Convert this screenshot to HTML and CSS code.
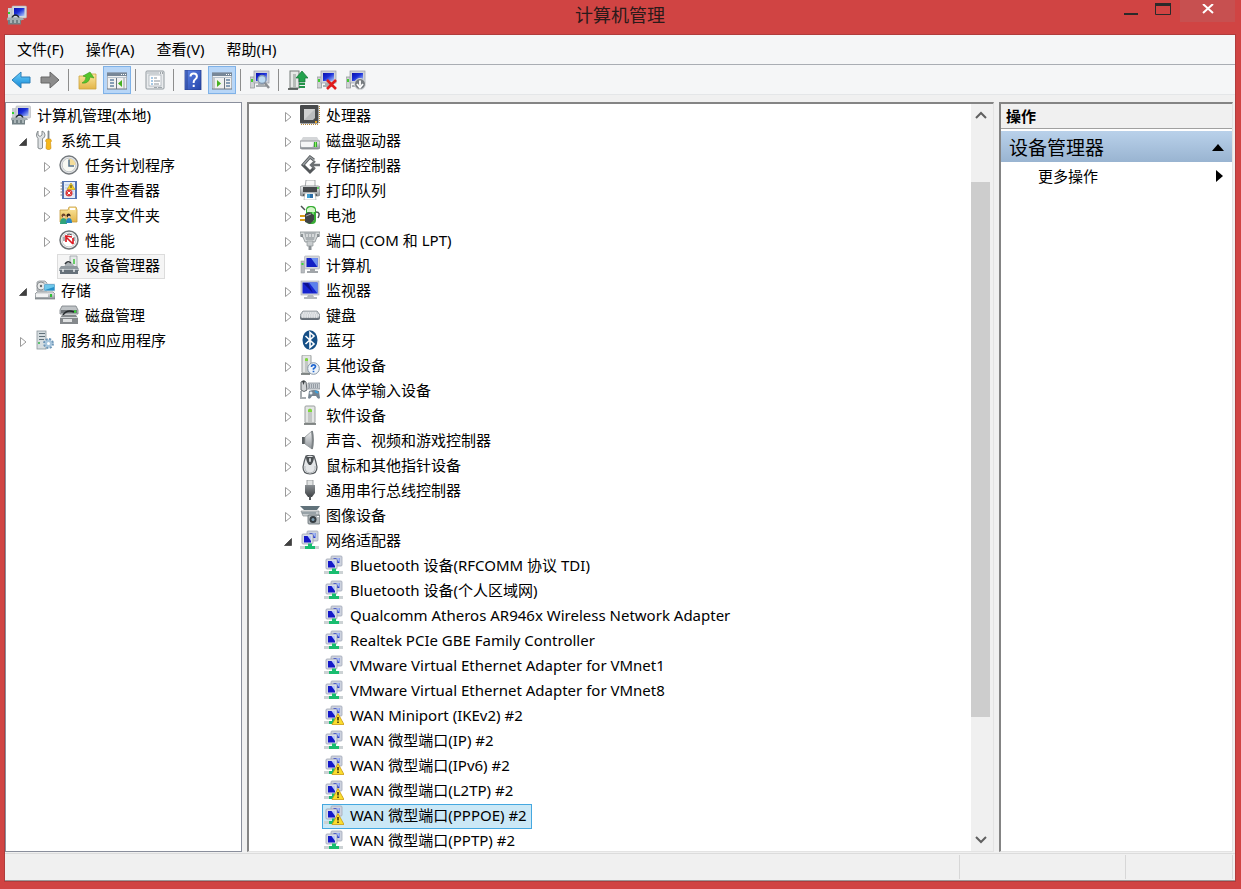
FILE: index.html
```html
<!DOCTYPE html>
<html lang="zh-CN">
<head>
  <meta charset="UTF-8">
  <meta name="viewport" content="width=device-width, initial-scale=1">
  <title>计算机管理</title>
  <link rel="stylesheet" href="styles.css">
</head>
<body>
  <!-- icon sprite -->
  <svg class="sprite" aria-hidden="true">
    <defs>
      <linearGradient id="g-screen" x1="0" y1="0" x2="1" y2="1"><stop offset="0" stop-color="#0a0fae"/><stop offset=".45" stop-color="#1a2fd8"/><stop offset="1" stop-color="#b5cef8"/></linearGradient>
      <linearGradient id="g-metal" x1="0" y1="0" x2="0" y2="1"><stop offset="0" stop-color="#f2f3f4"/><stop offset="1" stop-color="#8d9398"/></linearGradient>
      <linearGradient id="g-dark" x1="0" y1="0" x2="0" y2="1"><stop offset="0" stop-color="#8a8f93"/><stop offset="1" stop-color="#3f4346"/></linearGradient>
      <linearGradient id="g-folder" x1="0" y1="0" x2="0" y2="1"><stop offset="0" stop-color="#fbe7a0"/><stop offset="1" stop-color="#e3b548"/></linearGradient>
      <linearGradient id="g-blue" x1="0" y1="0" x2="0" y2="1"><stop offset="0" stop-color="#6cd0fb"/><stop offset="1" stop-color="#1387d6"/></linearGradient>
      <linearGradient id="g-help" x1="0" y1="0" x2="1" y2="1"><stop offset="0" stop-color="#5f86e8"/><stop offset="1" stop-color="#2343a8"/></linearGradient>
    </defs>
    <symbol id="i-mgmt" viewBox="0 0 20 20">
      <rect x="1" y="3" width="5" height="11" fill="#c9ced1"/><rect x="1" y="7" width="2" height="2" fill="#31d431"/>
      <rect x="5" y="1" width="14.500" height="12" rx="1" fill="#d5d8dc" stroke="#b0b4b8" stroke-width=".6"/>
      <rect x="7" y="3" width="10.500" height="8" fill="url(#g-screen)"/>
      <path d="M12 13h4l1 2H9z" fill="#a4a9ad"/>
      <path d="M5 13q1-3 3.500-3t3.500 3" fill="none" stroke="#222a30" stroke-width="1.500"/>
      <rect x="0" y="12.500" width="15" height="3" rx="1" fill="#a3aeb1"/><rect x="1" y="15" width="13" height="4.500" fill="#738185"/>
      <path d="M4 15v3M8 15v3M12 15v3" stroke="#dfe6e7"/>
    </symbol>
    <symbol id="i-tools" viewBox="0 0 20 20">
      <path d="M3 1v4l2 1.500L7 5V1q3 1 3 4T7.500 8.500V18q-2.500 2-4.500 0V8.500Q1.500 7 1.500 5T3 1z" fill="#dfe2e4" stroke="#7d8387" stroke-width=".9"/>
      <path d="M13 1h1v9h-1z" fill="#9aa0a4" stroke="#777d81" stroke-width=".8"/>
      <path d="M11.500 9h4l1 2-1 1.500.5 6-1.500 1h-2l-1.500-1 .5-6-1-1.500z" fill="#f6b81c" stroke="#c98a0a" stroke-width=".6"/>
    </symbol>
    <symbol id="i-clock" viewBox="0 0 20 20">
      <circle cx="10" cy="10" r="9" fill="#e8e9ea" stroke="#74797d" stroke-width="1.400"/>
      <circle cx="10" cy="10" r="6.800" fill="#f8f8f2" stroke="#b9bec2" stroke-width=".8"/>
      <path d="M10 10V3.500A6.500 6.500 0 0 1 16.500 10z" fill="#f3dc9a"/>
      <path d="M10 4.500V11h5" fill="none" stroke="#55738c" stroke-width="1.500"/>
    </symbol>
    <symbol id="i-event" viewBox="0 0 20 20">
      <rect x="3" y="1" width="15" height="18" fill="#5273b5"/><rect x="5" y="2" width="11" height="16" fill="#e4edf8"/>
      <path d="M6 5h9M6 8h9M6 11h9M6 14h9" stroke="#a2bade" stroke-width=".8"/>
      <path d="M12 3l4 6.500H8z" fill="#f8d222" stroke="#b59411" stroke-width=".6"/><path d="M12 5v3" stroke="#333"/>
      <circle cx="10" cy="13" r="3.500" fill="#dc3c3c"/><path d="M8.500 11.500l3 3m0-3l-3 3" stroke="#fff"/>
      <path d="M1.500 3h3M1.500 6h3M1.500 9h3M1.500 12h3M1.500 15h3" stroke="#757a80" stroke-width="1.200"/>
    </symbol>
    <symbol id="i-share" viewBox="0 0 20 20">
      <path d="M1 5h8l1-3h7l1 3v12H1z" fill="url(#g-folder)" stroke="#c59b3c" stroke-width=".8"/><rect x="11" y="3" width="5" height="2" fill="#fff"/>
      <circle cx="4.500" cy="10.500" r="2" fill="#70452a"/><circle cx="9.500" cy="10.500" r="2" fill="#35231a"/>
      <path d="M1 19q0-6 3.500-6T8 19z" fill="#2fa37c"/><path d="M7 18q0-5 3-5t3 5z" fill="#2a86c4"/><circle cx="5" cy="12" r="1.200" fill="#f2c9a5"/><circle cx="10" cy="12" r="1.200" fill="#f2c9a5"/>
    </symbol>
    <symbol id="i-perf" viewBox="0 0 20 20">
      <circle cx="10" cy="10" r="9" fill="#fff" stroke="#6c7175" stroke-width="1.500"/><circle cx="10" cy="10" r="7" fill="#fff" stroke="#a8adb0" stroke-width=".7"/>
      <path d="M5 7v4M15 7v4M8 5l2-1 3 1" stroke="#54595d" stroke-width="1" fill="none"/>
      <path d="M6 6l8 8M7 12V6l6 1M14 8v6" fill="none" stroke="#dc1c24" stroke-width="1.700"/>
    </symbol>
    <symbol id="i-devmgr" viewBox="0 0 20 20">
      <path d="M11 1h7v12h-7z" fill="#e6e9e9" stroke="#9aa0a3" stroke-width=".8"/><path d="M15 4v5" stroke="#3cc33c" stroke-width="1.500"/>
      <path d="M5 12l2-4h6l3 4z" fill="#aab1b5"/><path d="M6 9q3-4 6-1" fill="none" stroke="#31373b" stroke-width="1.500"/>
      <path d="M2 11h16l2 3v2H0v-2z" fill="#8f989e"/><path d="M1 15h18v4H1z" fill="#66717a"/><path d="M0 14.500h20" stroke="#b4bcc1"/><path d="M4 14v3M15 14v3" stroke="#e4e8ea" stroke-width="1.500"/>
    </symbol>
    <symbol id="i-storage" viewBox="0 0 20 20">
      <path d="M2 2l2-1h6l2 2v8H2z" fill="#d0d4d6" stroke="#8a9094" stroke-width=".8"/><circle cx="6" cy="6" r="4" fill="#e7e9e9" stroke="#74797c" stroke-width=".8"/><circle cx="6" cy="6" r="1.200" fill="#666"/>
      <rect x="9" y="4" width="11" height="7" fill="#258fc8" stroke="#d5dde2" stroke-width=".8"/><path d="M10 5h9v2l-9 3z" fill="#6ec7ea"/>
      <path d="M2 12h16l2 2v5H0v-5z" fill="url(#g-metal)" stroke="#747b80" stroke-width=".7"/><rect x="1" y="14" width="12" height="3" fill="#f2f3f3"/><rect x="15" y="14" width="2" height="3" fill="#2fc03a"/>
    </symbol>
    <symbol id="i-disk" viewBox="0 0 20 20">
      <path d="M3 1h14l2 4v4H1V5z" fill="#bfc3c6" stroke="#777c80" stroke-width=".8"/><rect x="2" y="5" width="16" height="3" fill="#707579"/><circle cx="16" cy="6.500" r="1.300" fill="#36dc36"/>
      <path d="M4 10q4-6 11-3" fill="none" stroke="#24292c" stroke-width="1.500"/>
      <path d="M3 10h14l2 3v6H1v-6z" fill="#85898c"/><path d="M1 12.500h18" stroke="#d5d8da"/><rect x="4" y="14" width="9" height="3" fill="#dfe1e2"/>
    </symbol>
    <symbol id="i-service" viewBox="0 0 20 20">
      <rect x="2" y="1" width="9" height="18" fill="#d6dde0" stroke="#8b969c" stroke-width=".8"/><path d="M4 3.500h6M4 6.500h6M4 9.500h5" stroke="#60717a" stroke-width="1.200"/><path d="M4 12v2" stroke="#36b94a" stroke-width="1.500"/>
      <circle cx="13.500" cy="13.500" r="4.200" fill="#c9dceb" stroke="#6e97b8" stroke-width="2.500" stroke-dasharray="2 1.300"/><circle cx="13.500" cy="13.500" r="3.500" fill="#a6c5dd"/><circle cx="13.500" cy="13.500" r="1.500" fill="#fff"/>
    </symbol>
    <symbol id="i-cpu" viewBox="0 0 20 20">
      <path d="M1 19.500h18M19.500 1v18" stroke="#bb8b3a" stroke-dasharray="1 1"/><rect x="0" y="0" width="18.500" height="18.500" rx="1" fill="#484a4c"/><path d="M4 4h11v9l-2 2H4z" fill="#bbbdbf"/><path d="M4 4h11L4 15z" fill="#d0d1d2"/><rect x="15" y="16" width="2" height="2" fill="#e6a426"/>
    </symbol>
    <symbol id="i-drive" viewBox="0 0 20 20">
      <path d="M3 7h14l3 5H0z" fill="#d4d6d8"/><path d="M0 11h20v6q0 2-2 2H2q-2 0-2-2z" fill="url(#g-metal)" stroke="#85898d" stroke-width=".8"/><rect x="1" y="12" width="12" height="5" rx="1" fill="#f5f6f6"/><rect x="14" y="12" width="3" height="5" fill="#35a934"/><path d="M15.500 12v5" stroke="#8cf25b"/>
    </symbol>
    <symbol id="i-ctrl" viewBox="0 0 20 20">
      <path d="M14 5l-4-3-7 8 7 7 4-4" fill="none" stroke="#53575a" stroke-width="3"/><path d="M3 10l7-8 4 3" fill="none" stroke="#989da0" stroke-width="1.500"/><path d="M20 10h-8m3-4l-4 4 4 4" fill="none" stroke="#6d7174" stroke-width="2.400"/>
    </symbol>
    <symbol id="i-printer" viewBox="0 0 20 20">
      <path d="M6 0h9v8H5z" fill="#f8f8f8" stroke="#93979a" stroke-width=".8"/><rect x="0" y="6" width="20" height="10" rx="2" fill="url(#g-metal)" stroke="#74797d" stroke-width=".7"/><path d="M3 7h14v5H3z" fill="#46494c"/><path d="M3 14h14v2H3z" fill="#54585a"/>
      <path d="M5 13h10l1 7H4z" fill="#fff" stroke="#9ea4a8" stroke-width=".6"/><rect x="7" y="14" width="3" height="4" fill="#3f9fd3"/><rect x="10" y="14" width="3" height="4" fill="#2c6ea8"/><circle cx="18" cy="8" r="1" fill="#38c638"/>
    </symbol>
    <symbol id="i-battery" viewBox="0 0 20 20">
      <path d="M1 1l4 4M16 7q5 0 2 6" stroke="#4d5154" stroke-width="1.500" fill="none"/>
      <rect x="6" y="1" width="10" height="18" rx="4" fill="#37ad34"/><path d="M7 4q4-4 8 0v3H7z" fill="#d4f5c9"/><path d="M13 7v9" stroke="#6fe06f" stroke-width="2"/>
      <path d="M0 11h6M0 15h6" stroke="#d89c16" stroke-width="1.800"/><path d="M5 9l4-2 5 3v5l-4 4-5-2z" fill="#404446"/><path d="M6 11l5-2" stroke="#a2a6a8"/>
    </symbol>
    <symbol id="i-port" viewBox="0 0 20 20">
      <path d="M0 2h20v4l-3 1-2 5H5L3 7 0 6z" fill="#d6dadb" stroke="#878d91" stroke-width=".8"/><path d="M4 2h12l-2 8H6z" fill="#a9afb2"/><path d="M7 4v3M10 4v3M13 4v3" stroke="#fff"/><path d="M7 11h6v5H7z" fill="#c8ccce" stroke="#8c9296" stroke-width=".7"/><path d="M8.500 16h3v4h-3z" fill="#8b9195"/><path d="M2 4v3M18 4v3" stroke="#757c80" stroke-width="1.500"/>
    </symbol>
    <symbol id="i-computer" viewBox="0 0 20 20">
      <rect x="1" y="6" width="3.500" height="12" fill="#b7bbbf" stroke="#8c9195" stroke-width=".5"/><rect x="1.500" y="8" width="2" height="2" fill="#37dc37"/>
      <rect x="4.500" y="1" width="15" height="13" rx="1" fill="#d5d7db" stroke="#a6a9ae" stroke-width=".6"/><rect x="6.500" y="3" width="11" height="9" fill="#1220c4"/><path d="M11 3h6.500v9z" fill="#6c90f0"/><path d="M10 14h5v2h3v2H7v-2h3z" fill="#a1a5a9"/>
    </symbol>
    <symbol id="i-monitor" viewBox="0 0 20 20">
      <rect x="1" y="1" width="18" height="14" fill="#d5d7db" stroke="#a6a9ae" stroke-width=".6"/><rect x="2.500" y="2.500" width="15" height="11" fill="#1724cf"/><path d="M9 2.500h8.500v11z" fill="#5a80ec"/><path d="M3 3h5l5 10z" fill="#0a108f"/><path d="M8 15h5l1 2h3v2H4v-2h3z" fill="#b4b8bc"/>
    </symbol>
    <symbol id="i-keyboard" viewBox="0 0 20 20">
      <path d="M3 6h14l3 4v3q0 2-2 2H2q-2 0-2-2v-3z" fill="#676f78"/><path d="M3 6h14l3 4-1 3H1l-1-3z" fill="#c8cdd1" stroke="#767d83" stroke-width=".6"/><path d="M3 8h14M2 10h17M2 12h16" stroke="#fff" stroke-width="1.200" stroke-dasharray="1.500 .8"/>
    </symbol>
    <symbol id="i-bt" viewBox="0 0 20 20">
      <ellipse cx="10" cy="10" rx="7.500" ry="9.800" fill="#164f86"/><path d="M5.500 6l8.500 8-4 3.500v-15l4 3.500-8.500 8" fill="none" stroke="#fff" stroke-width="1.600"/>
    </symbol>
    <symbol id="i-soft" viewBox="0 0 20 20">
      <rect x="5" y="1" width="10" height="17" rx="1" fill="#e3e5e4" stroke="#9a9f9e"/><rect x="8" y="4" width="4" height="13" fill="#c3c7c5"/><path d="M8 7V5q2-3 4 0v2z" fill="#7fd83c"/><path d="M4 19h12" stroke="#6a706f" stroke-width="1.600"/>
    </symbol>
    <symbol id="i-other" viewBox="0 0 20 20">
      <rect x="2" y="0" width="9" height="18" rx="1" fill="#e3e5e4" stroke="#9a9f9e"/><rect x="5" y="3" width="3" height="14" fill="#c3c7c5"/><path d="M5 6V4q1.500-2 3 0v2z" fill="#7fd83c"/><path d="M1 19h9" stroke="#6a706f" stroke-width="1.600"/>
      <circle cx="13.500" cy="13.500" r="5.800" fill="#eef4fa" stroke="#8796a5"/><path d="M11.500 12q0-2.200 2-2.200t2 1.800q0 1-2 2.200v1m0 1v1.500" fill="none" stroke="#2468d0" stroke-width="1.700"/>
    </symbol>
    <symbol id="i-hid" viewBox="0 0 20 20">
      <path d="M1 2q3-3 5 0l1 8q-3 3-6 0z" fill="#d1d4d6" stroke="#5d6367"/><path d="M2 1l1.500 4L5 1z" fill="#3c4144"/><path d="M8 3h12v6H8z" fill="#c8cdd2" stroke="#7d858c" stroke-width=".7"/><path d="M9 5h10M9 7h10" stroke="#626d77" stroke-dasharray="1 1"/>
      <path d="M8 18l1-7q5-2 10 0l1 7q-2 2-4-2h-4q-2 4-4 2z" fill="#758491"/><circle cx="11" cy="13" r="1.500" fill="#e5edf1"/><path d="M15 11l3 2" stroke="#38a0dd" stroke-width="2"/><path d="M1 11v7h5" stroke="#a6abaf" stroke-width="2" fill="none"/>
    </symbol>
    <symbol id="i-sound" viewBox="0 0 20 20">
      <path d="M2 7h3v7H2z" fill="#5b6063"/><path d="M5 7l7-6v18l-7-5z" fill="url(#g-metal)" stroke="#8f9598" stroke-width=".8"/><path d="M12 1q2 9 0 18" fill="none" stroke="#7b8184" stroke-width="1.800"/>
    </symbol>
    <symbol id="i-mouse" viewBox="0 0 20 20">
      <path d="M6 1q4-1.500 8 0 2 5 3 11 0 7-7 7t-7-7q1-6 3-11z" fill="#e4e6e8" stroke="#53585c" stroke-width="1.200"/><path d="M6 1q0 6 3 9h2q3-3 3-9l-2 1H8z" fill="#4b5053"/><rect x="9" y="3" width="2" height="4" rx="1" fill="#c9cdd0"/><path d="M5 11q-1 6 5 7 6-1 5-7" stroke="#b3b8bb" fill="none"/>
    </symbol>
    <symbol id="i-usb" viewBox="0 0 20 20">
      <rect x="7" y="0" width="6" height="6" fill="#e1e3e3" stroke="#8d9193" stroke-width=".8"/><path d="M5 5h10v8l-3 4H8l-3-4z" fill="url(#g-dark)"/><rect x="9" y="16" width="2" height="4" fill="#53575a"/>
    </symbol>
    <symbol id="i-image" viewBox="0 0 20 20">
      <path d="M0 1h20l-3 4H4z" fill="#61727a"/><path d="M1 6h18v5H3z" fill="#c7cccf" stroke="#868d91" stroke-width=".7"/><path d="M2 8h14" stroke="#78858c" stroke-width="1.200"/><rect x="8" y="10" width="12" height="9" rx="1" fill="#b4babd" stroke="#606a70" stroke-width=".8"/><circle cx="13" cy="14.500" r="3.500" fill="#343c42"/><circle cx="13" cy="14.500" r="1.500" fill="#7c9cb0"/><rect x="17" y="11" width="2" height="1" fill="#fff"/>
    </symbol>
    <symbol id="i-net" viewBox="0 0 20 20">
      <rect x="7" y="1" width="11" height="10" rx="1" fill="#cdd2de" stroke="#a2a8b8" stroke-width=".8"/><rect x="9.500" y="3" width="6" height="5" fill="#2337d0"/><path d="M12 3h3.500v5z" fill="#9fb5f5"/>
      <rect x="2" y="4" width="11" height="10" rx="1" fill="#d9dde8" stroke="#9ca2b0" stroke-width=".8"/><rect x="4" y="6" width="7" height="6.500" fill="#1418c8"/><path d="M7.500 6H11v5z" fill="#b7c8f8"/>
      <path d="M0 16h19v3H0z" fill="#ccd2d4"/><path d="M8 13.500h4v2.500h3v3H5v-3h3z" fill="#19bd70"/>
    </symbol>
    <symbol id="i-netwarn" viewBox="0 0 20 20">
      <use href="#i-net"/><path d="M14 8.500l6 11H8z" fill="#fbdd2e" stroke="#cb9c10" stroke-width=".8"/><path d="M14 12v3.500m0 1v1.500" stroke="#332b08" stroke-width="1.500"/>
    </symbol>
    <!-- toolbar -->
    <symbol id="i-back" viewBox="0 0 20 20"><path d="M1 10l9-8v5h9v6h-9v5z" fill="url(#g-blue)" stroke="#2c7fb8"/></symbol>
    <symbol id="i-next" viewBox="0 0 20 20"><path d="M19 10l-9-8v5H1v6h9v5z" fill="#8c8c8c" stroke="#666"/></symbol>
    <symbol id="i-up" viewBox="0 0 20 20">
      <path d="M1 6h7l2-2h8v15H1z" fill="url(#g-folder)" stroke="#cda53f" stroke-width=".8"/><path d="M4 13q4-2 4-6L5 6l7-4 4 6-4-1q-1 7-8 6z" fill="#54c52c" stroke="#379a1b" stroke-width=".6"/>
    </symbol>
    <symbol id="i-tree" viewBox="0 0 20 20">
      <rect x="0" y="3" width="20" height="16" fill="#f1f1f1" stroke="#6c7580"/><rect x="0" y="3" width="20" height="3" fill="#788798"/><path d="M14 4.500h1m1 0h1m1 0h1" stroke="#fff"/><path d="M1 7.500h18" stroke="#b9c3cd"/><path d="M9.500 8v11" stroke="#6c7580"/><path d="M3 10h4M3 13h4M3 16h4" stroke="#6482a2" stroke-width="1.500"/><path d="M15 10v7l-4-3.500z" fill="#46b021"/><path d="M17 8v11" stroke="#9ba2a8"/>
    </symbol>
    <symbol id="i-action" viewBox="0 0 20 20">
      <rect x="0" y="3" width="20" height="16" fill="#f1f1f1" stroke="#6c7580"/><rect x="0" y="3" width="20" height="3" fill="#788798"/><path d="M14 4.500h1m1 0h1m1 0h1" stroke="#fff"/><path d="M1 7.500h18" stroke="#b9c3cd"/><path d="M12.500 8v11" stroke="#6c7580"/><path d="M14 10h4M14 13h4M14 16h4" stroke="#6482a2" stroke-width="1.500"/><path d="M5 10v7l4-3.500z" fill="#46b021"/><path d="M2 8v11" stroke="#9ba2a8"/>
    </symbol>
    <symbol id="i-props" viewBox="0 0 20 20">
      <rect x="1" y="1" width="18" height="18" rx="1" fill="#e9ebed" stroke="#929a9f"/><path d="M2 3h12" stroke="#aeb5ba"/><path d="M15 3h1m1 0h1" stroke="#555e64"/><rect x="4" y="5" width="12" height="11" fill="#fff" stroke="#a7b0b6" stroke-width=".8"/><path d="M6 8h2M6 11h2M6 14h2" stroke="#4f92c9"/><path d="M9 8h3M9 11h6M9 14h5" stroke="#89939a"/><path d="M9 17.500h3m1 0h4" stroke="#9fa7ac"/>
    </symbol>
    <symbol id="i-help" viewBox="0 0 20 20">
      <rect x="2" y="0" width="16" height="20" fill="url(#g-help)" stroke="#273e8e" stroke-width=".8"/><path d="M4 0v20" stroke="#2b4494"/><path d="M7.500 6.500q0-3 3.200-3t3.200 3q0 1.600-1.600 2.700T10.700 12v1m0 1.800v2.200" fill="none" stroke="#fff" stroke-width="2"/>
    </symbol>
    <symbol id="i-pc" viewBox="0 0 20 20">
      <rect x="0" y="7" width="4.500" height="11" fill="#cfd2d4" stroke="#898e91" stroke-width=".7"/><rect x="1" y="9" width="2" height="3" fill="#42ce31"/><rect x="4" y="1" width="15" height="12" fill="#cfd2da" stroke="#989da6" stroke-width=".7"/><rect x="6" y="3" width="11" height="8" fill="url(#g-screen)"/><path d="M8 13h6v2h2v2H6v-2h2z" fill="#a8adb1"/>
    </symbol>
    <symbol id="i-scan" viewBox="0 0 20 20">
      <use href="#i-pc"/><path d="M14 12l5 6" stroke="#8b8e92" stroke-width="2.500"/><circle cx="12" cy="9.500" r="4" fill="#bbdaf2" stroke="#8598ae" stroke-width="1.400"/>
    </symbol>
    <symbol id="i-update" viewBox="0 0 20 20">
      <rect x="2" y="1" width="9" height="17" fill="#e7e9e7" stroke="#777d7a"/><rect x="5" y="4" width="3" height="13" fill="#b7bdb9"/><path d="M0 19h10" stroke="#454b48" stroke-width="1.600"/><path d="M14 1l6 7h-3v4h-6V8H8z" fill="#24a34e" stroke="#157438" stroke-width=".7"/><path d="M11 14h6M11 17h6" stroke="#24934a" stroke-width="2"/>
    </symbol>
    <symbol id="i-remove" viewBox="0 0 20 20"><use href="#i-pc"/><path d="M10 10l9 9m0-9l-9 9" stroke="#e01c1c" stroke-width="2.600"/></symbol>
    <symbol id="i-disable" viewBox="0 0 20 20"><use href="#i-pc"/><circle cx="14" cy="14" r="5.500" fill="#777c80" stroke="#d9dbdd"/><path d="M14 10.500v5m-3-1.500l3 3.500 3-3.500" stroke="#fff" stroke-width="1.800" fill="none"/></symbol>
    <!-- tree arrows -->
    <symbol id="a-closed" viewBox="0 0 8 12"><path d="M1.500 1.500v9L7 6z" fill="#fff" stroke="#9a9a9a"/></symbol>
    <symbol id="a-open" viewBox="0 0 8 12"><path d="M7.500 2.500v7h-7z" fill="#404040" stroke="#262626" stroke-width=".6"/></symbol>
  </svg>

  <header class="titlebar">
    <svg class="icon"><use href="#i-mgmt"/></svg>
    <h1>计算机管理</h1>
    <div class="caption">
      <button class="cap" aria-label="最小化"><svg width="16" height="14"><path d="M1 12h14" stroke="#2a2a2a" stroke-width="2"/></svg></button>
      <button class="cap" aria-label="最大化"><svg width="16" height="14"><path d="M.5 1v11.500h15V1" fill="none" stroke="#2a2a2a"/><path d="M0 2.500h16" stroke="#2a2a2a" stroke-width="3"/></svg></button>
      <button class="cap close" aria-label="关闭"><svg width="12" height="10"><path d="M1 0l10 9M11 0L1 9" stroke="#fff" stroke-width="2"/></svg></button>
    </div>
  </header>

  <div class="window">
    <nav class="menubar">
      <button>文件(F)</button>
      <button>操作(A)</button>
      <button>查看(V)</button>
      <button>帮助(H)</button>
    </nav>

    <div class="toolbar" role="toolbar">
      <button aria-label="后退"><svg class="icon"><use href="#i-back"/></svg></button>
      <button aria-label="前进"><svg class="icon"><use href="#i-next"/></svg></button>
      <span class="sep"></span>
      <button aria-label="上一级"><svg class="icon"><use href="#i-up"/></svg></button>
      <button class="on" aria-label="显示/隐藏控制台树"><svg class="icon"><use href="#i-tree"/></svg></button>
      <span class="sep"></span>
      <button aria-label="属性"><svg class="icon"><use href="#i-props"/></svg></button>
      <span class="sep"></span>
      <button aria-label="帮助"><svg class="icon"><use href="#i-help"/></svg></button>
      <button class="on" aria-label="显示/隐藏操作窗格"><svg class="icon"><use href="#i-action"/></svg></button>
      <span class="sep"></span>
      <button aria-label="扫描检测硬件改动"><svg class="icon"><use href="#i-scan"/></svg></button>
      <span class="sep"></span>
      <button aria-label="更新驱动程序"><svg class="icon"><use href="#i-update"/></svg></button>
      <button aria-label="卸载"><svg class="icon"><use href="#i-remove"/></svg></button>
      <button aria-label="禁用"><svg class="icon"><use href="#i-disable"/></svg></button>
    </div>

    <main class="panes">
      <section class="pane console">
        <ul class="tree">
          <li><div class="row root"><span class="label"><svg class="icon"><use href="#i-mgmt"/></svg>计算机管理(本地)</span></div>
            <ul>
              <li><div class="row"><button class="arrow" aria-label="折叠"><svg><use href="#a-open"/></svg></button><span class="label"><svg class="icon"><use href="#i-tools"/></svg>系统工具</span></div>
                <ul>
                  <li class="row"><button class="arrow" aria-label="展开"><svg><use href="#a-closed"/></svg></button><span class="label"><svg class="icon"><use href="#i-clock"/></svg>任务计划程序</span></li>
                  <li class="row"><button class="arrow" aria-label="展开"><svg><use href="#a-closed"/></svg></button><span class="label"><svg class="icon"><use href="#i-event"/></svg>事件查看器</span></li>
                  <li class="row"><button class="arrow" aria-label="展开"><svg><use href="#a-closed"/></svg></button><span class="label"><svg class="icon"><use href="#i-share"/></svg>共享文件夹</span></li>
                  <li class="row"><button class="arrow" aria-label="展开"><svg><use href="#a-closed"/></svg></button><span class="label"><svg class="icon"><use href="#i-perf"/></svg>性能</span></li>
                  <li class="row leaf"><span class="label current"><svg class="icon"><use href="#i-devmgr"/></svg>设备管理器</span></li>
                </ul>
              </li>
              <li><div class="row"><button class="arrow" aria-label="折叠"><svg><use href="#a-open"/></svg></button><span class="label"><svg class="icon"><use href="#i-storage"/></svg>存储</span></div>
                <ul>
                  <li class="row leaf"><span class="label"><svg class="icon"><use href="#i-disk"/></svg>磁盘管理</span></li>
                </ul>
              </li>
              <li class="row"><button class="arrow" aria-label="展开"><svg><use href="#a-closed"/></svg></button><span class="label"><svg class="icon"><use href="#i-service"/></svg>服务和应用程序</span></li>
            </ul>
          </li>
        </ul>
      </section>

      <section class="pane devices">
        <ul class="tree">
          <li class="row"><button class="arrow" aria-label="展开"><svg><use href="#a-closed"/></svg></button><span class="label"><svg class="icon"><use href="#i-cpu"/></svg>处理器</span></li>
          <li class="row"><button class="arrow" aria-label="展开"><svg><use href="#a-closed"/></svg></button><span class="label"><svg class="icon"><use href="#i-drive"/></svg>磁盘驱动器</span></li>
          <li class="row"><button class="arrow" aria-label="展开"><svg><use href="#a-closed"/></svg></button><span class="label"><svg class="icon"><use href="#i-ctrl"/></svg>存储控制器</span></li>
          <li class="row"><button class="arrow" aria-label="展开"><svg><use href="#a-closed"/></svg></button><span class="label"><svg class="icon"><use href="#i-printer"/></svg>打印队列</span></li>
          <li class="row"><button class="arrow" aria-label="展开"><svg><use href="#a-closed"/></svg></button><span class="label"><svg class="icon"><use href="#i-battery"/></svg>电池</span></li>
          <li class="row"><button class="arrow" aria-label="展开"><svg><use href="#a-closed"/></svg></button><span class="label"><svg class="icon"><use href="#i-port"/></svg>端口 (COM 和 LPT)</span></li>
          <li class="row"><button class="arrow" aria-label="展开"><svg><use href="#a-closed"/></svg></button><span class="label"><svg class="icon"><use href="#i-computer"/></svg>计算机</span></li>
          <li class="row"><button class="arrow" aria-label="展开"><svg><use href="#a-closed"/></svg></button><span class="label"><svg class="icon"><use href="#i-monitor"/></svg>监视器</span></li>
          <li class="row"><button class="arrow" aria-label="展开"><svg><use href="#a-closed"/></svg></button><span class="label"><svg class="icon"><use href="#i-keyboard"/></svg>键盘</span></li>
          <li class="row"><button class="arrow" aria-label="展开"><svg><use href="#a-closed"/></svg></button><span class="label"><svg class="icon"><use href="#i-bt"/></svg>蓝牙</span></li>
          <li class="row"><button class="arrow" aria-label="展开"><svg><use href="#a-closed"/></svg></button><span class="label"><svg class="icon"><use href="#i-other"/></svg>其他设备</span></li>
          <li class="row"><button class="arrow" aria-label="展开"><svg><use href="#a-closed"/></svg></button><span class="label"><svg class="icon"><use href="#i-hid"/></svg>人体学输入设备</span></li>
          <li class="row"><button class="arrow" aria-label="展开"><svg><use href="#a-closed"/></svg></button><span class="label"><svg class="icon"><use href="#i-soft"/></svg>软件设备</span></li>
          <li class="row"><button class="arrow" aria-label="展开"><svg><use href="#a-closed"/></svg></button><span class="label"><svg class="icon"><use href="#i-sound"/></svg>声音、视频和游戏控制器</span></li>
          <li class="row"><button class="arrow" aria-label="展开"><svg><use href="#a-closed"/></svg></button><span class="label"><svg class="icon"><use href="#i-mouse"/></svg>鼠标和其他指针设备</span></li>
          <li class="row"><button class="arrow" aria-label="展开"><svg><use href="#a-closed"/></svg></button><span class="label"><svg class="icon"><use href="#i-usb"/></svg>通用串行总线控制器</span></li>
          <li class="row"><button class="arrow" aria-label="展开"><svg><use href="#a-closed"/></svg></button><span class="label"><svg class="icon"><use href="#i-image"/></svg>图像设备</span></li>
          <li><div class="row"><button class="arrow" aria-label="折叠"><svg><use href="#a-open"/></svg></button><span class="label"><svg class="icon"><use href="#i-net"/></svg>网络适配器</span></div>
            <ul>
              <li class="row leaf"><span class="label"><svg class="icon"><use href="#i-net"/></svg>Bluetooth 设备(RFCOMM 协议 TDI)</span></li>
              <li class="row leaf"><span class="label"><svg class="icon"><use href="#i-net"/></svg>Bluetooth 设备(个人区域网)</span></li>
              <li class="row leaf"><span class="label"><svg class="icon"><use href="#i-net"/></svg>Qualcomm Atheros AR946x Wireless Network Adapter</span></li>
              <li class="row leaf"><span class="label"><svg class="icon"><use href="#i-net"/></svg>Realtek PCIe GBE Family Controller</span></li>
              <li class="row leaf"><span class="label"><svg class="icon"><use href="#i-net"/></svg>VMware Virtual Ethernet Adapter for VMnet1</span></li>
              <li class="row leaf"><span class="label"><svg class="icon"><use href="#i-net"/></svg>VMware Virtual Ethernet Adapter for VMnet8</span></li>
              <li class="row leaf"><span class="label"><svg class="icon"><use href="#i-netwarn"/></svg>WAN Miniport (IKEv2) #2</span></li>
              <li class="row leaf"><span class="label"><svg class="icon"><use href="#i-net"/></svg>WAN 微型端口(IP) #2</span></li>
              <li class="row leaf"><span class="label"><svg class="icon"><use href="#i-netwarn"/></svg>WAN 微型端口(IPv6) #2</span></li>
              <li class="row leaf"><span class="label"><svg class="icon"><use href="#i-netwarn"/></svg>WAN 微型端口(L2TP) #2</span></li>
              <li class="row leaf"><span class="label selected"><svg class="icon"><use href="#i-netwarn"/></svg>WAN 微型端口(PPPOE) #2</span></li>
              <li class="row leaf"><span class="label"><svg class="icon"><use href="#i-net"/></svg>WAN 微型端口(PPTP) #2</span></li>
            </ul>
          </li>
        </ul>
        <div class="scrollbar">
          <button aria-label="向上滚动"><svg width="12" height="8"><path d="M1 7l5-5 5 5" fill="none" stroke="#606060" stroke-width="2"/></svg></button>
          <div class="track"><div class="thumb"></div></div>
          <button aria-label="向下滚动"><svg width="12" height="8"><path d="M1 1l5 5 5-5" fill="none" stroke="#606060" stroke-width="2"/></svg></button>
        </div>
      </section>

      <aside class="pane actions">
        <h2>操作</h2>
        <button class="group">设备管理器<svg width="12" height="7"><path d="M0 7l6-7 6 7z"/></svg></button>
        <button class="more">更多操作<svg width="8" height="12"><path d="M1 0l7 6-7 6z"/></svg></button>
      </aside>
    </main>

    <footer class="statusbar">
      <span></span>
      <span></span>
      <span></span>
    </footer>
  </div>
</body>
</html>
```

FILE: styles.css
```css
* { box-sizing: border-box; }
body {
  margin: 0;
  height: 100vh;
  display: flex;
  flex-direction: column;
  padding: 0 6px 8px 5px;
  background: #d04443;
  color: #000;
  font: 15px/20px "Noto Sans", "Noto Sans CJK SC", sans-serif;
  overflow: hidden;
}
button { margin: 0; padding: 0; border: 0; background: none; color: inherit; font: inherit; }
ul { margin: 0; padding: 0; list-style: none; }
svg { display: block; flex: none; }
.sprite { position: absolute; width: 0; height: 0; }
.icon { width: 20px; height: 20px; }

/* title bar */
.titlebar { display: grid; grid-template-columns: 1fr auto 1fr; height: 35px; }
.titlebar .icon { margin: 5px 2px; }
.titlebar h1 { margin: 0; font-size: 18px; font-weight: 400; line-height: 30px; color: #2a1a1a; }
.caption { display: flex; justify-content: flex-end; align-items: flex-start; }
.cap { width: 32px; height: 22px; display: flex; justify-content: center; padding-top: 2px; }
.cap.close { width: 55px; margin-left: 1px; padding-top: 4px; background: #c75050; }

.window { flex: 1; min-height: 0; display: flex; flex-direction: column; background: #f0f0f0; border-bottom: 1px solid #9a9a9a; outline: 1px solid #b03c3c; }

/* menu and toolbar */
.menubar { display: flex; gap: 2px; height: 30px; padding: 0 0 2px 2px; background: #f5f6f7; border-bottom: 1px solid #a9adb3; }
.menubar button { padding: 0 10px; }
.toolbar { display: flex; align-items: center; gap: 1px; height: 30px; padding-left: 2px; background: #f5f6f7; border-bottom: 1px solid #e4e6e8; }
.toolbar button { width: 28px; height: 28px; display: flex; align-items: center; justify-content: center; }
.toolbar .on { background: #b8d6f7; border: 1px solid #7fb2e8; }
.toolbar .sep { width: 1px; height: 22px; margin: 0 4px 0 3px; background: #8d8d8d; }

/* panes */
.panes { flex: 1; min-height: 0; display: grid; grid-template-columns: 237fr 747fr 234fr; gap: 5px; padding: 7px 2px 1px 0; }
.pane { background: #fff; min-width: 0; overflow: hidden; }
.console { border: 1px solid #8a8f9c; padding: 1px 0 0 2px; }
.devices, .actions { border: 2px solid #848484; border-right: 1px solid #e3e3e3; border-bottom: 1px solid #e3e3e3; }
.devices { display: flex; }
.devices .tree { flex: 1; min-width: 0; padding-left: 35px; }

/* tree */
.row { display: flex; align-items: center; height: 25px; white-space: nowrap; }
.arrow { width: 14px; height: 25px; display: flex; align-items: center; }
.arrow svg { width: 8px; height: 12px; }
.leaf { padding-left: 14px; }
.label { display: flex; align-items: center; gap: 6px; height: 25px; padding: 0 4px 3px 1px; border: 1px solid transparent; }
.label.current { background: #f5f5f5; border-color: #dcdcdc; }
.label.selected { background: #cbe8f6; border-color: #45a8e0; }
.tree ul { padding-left: 24px; }
.console .tree > li > ul { padding-left: 11px; }
.root { padding-left: 1px; }

/* scrollbar */
.scrollbar { width: 22px; padding-right: 3px; display: flex; flex-direction: column; background: #f0f0f0; }
.scrollbar button { height: 22px; display: flex; align-items: center; justify-content: center; }
.track { flex: 1; }
.track::before { content: ""; display: block; height: 8%; }
.thumb { height: 76%; background: #cdcdcd; }

/* actions */
.actions h2 { margin: 0 0 2px; padding: 2px 5px; font-size: 15px; line-height: 20px; background: #f0f0f0; border-bottom: 1px solid #a0a0a0; }
.actions button { display: flex; width: 100%; align-items: center; justify-content: space-between; text-align: left; }
.actions .group { height: 31px; padding: 2px 8px 0; font-size: 19px; background: linear-gradient(#b9d1ea, #99b4d1); }
.actions .more { height: 28px; padding: 0 9px 0 37px; }

/* status bar */
.statusbar { display: grid; grid-template-columns: 1fr 166px 107px; height: 27px; padding: 1px 2px 1px 0; border-top: 1px solid #dcdcdc; }
.statusbar span { border-right: 1px solid #d7d7d7; }
```
